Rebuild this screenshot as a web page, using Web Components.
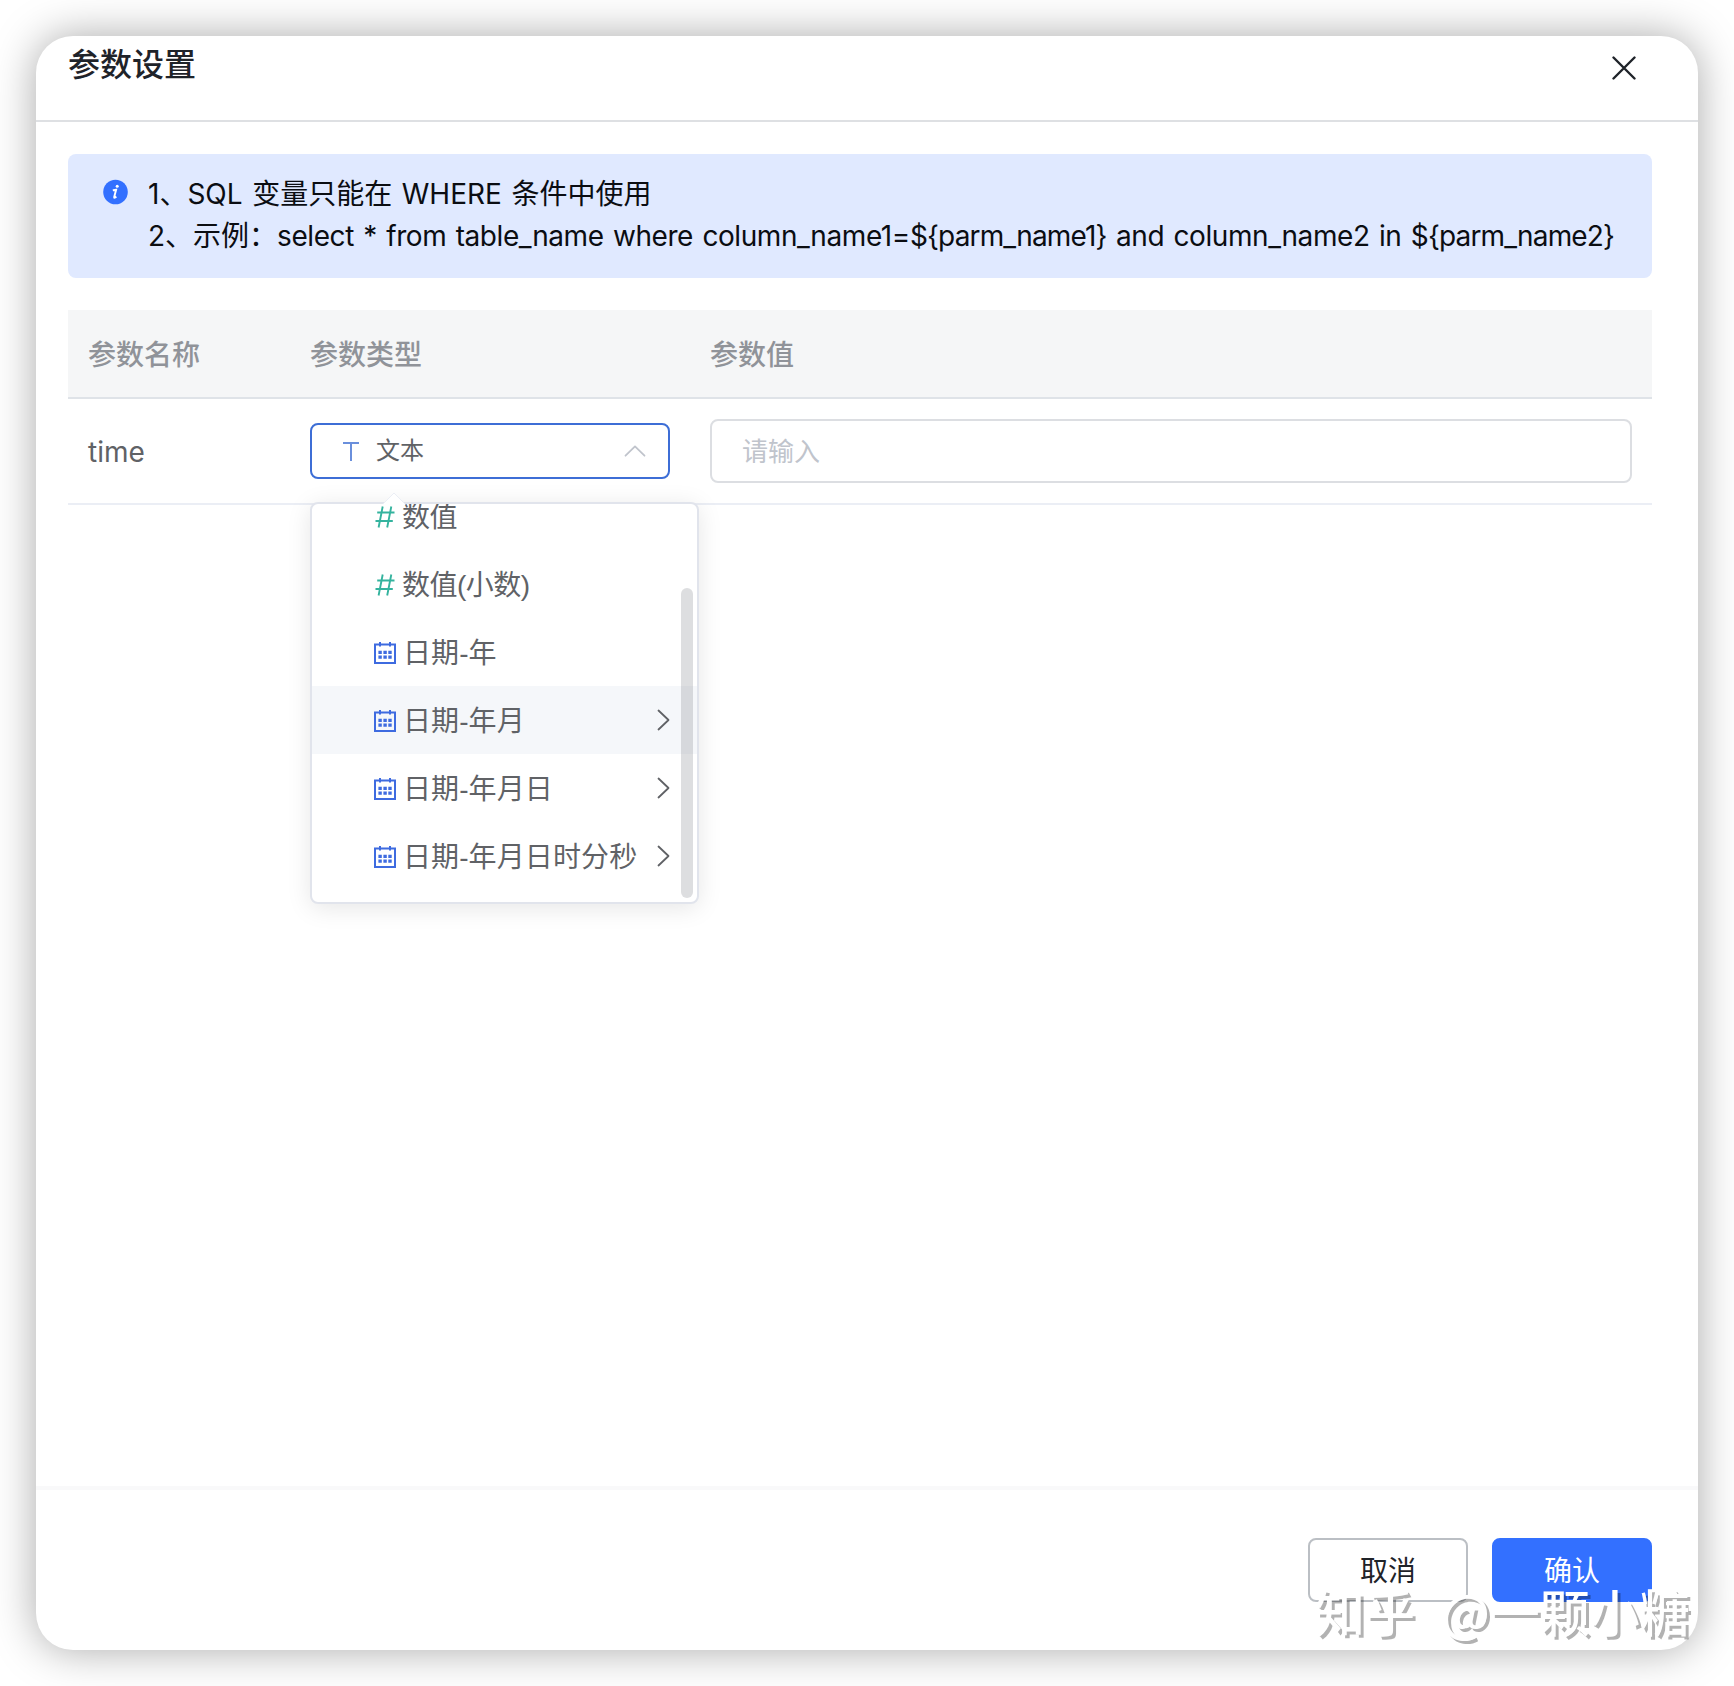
<!DOCTYPE html>
<html lang="zh-CN">
<head>
<meta charset="UTF-8">
<title>参数设置</title>
<style>
  body {
    box-sizing: border-box;
    margin: 0;
    padding: 36px;
    height: 1686px;
    overflow: hidden;
    background: #fff;
    font-family: Inter, "Noto Sans CJK SC", sans-serif;
    font-size: 28px;
    color: #606266;
  }
  .sql { letter-spacing: -.42px; word-spacing: 1.9px; }
  .var { letter-spacing: -.85px; }
</style>
</head>
<body>
<param-dialog heading="参数设置">
  <info-banner>
    <banner-line>1、SQL 变量只能在 WHERE 条件中使用</banner-line>
    <banner-line>2、示例：<span class="sql">select * from table_name where column_name1=<span class="var">${parm_name1}</span> and column_name2 in <span class="var">${parm_name2}</span></span></banner-line>
  </info-banner>
  <param-table>
    <span slot="name">time</span>
    <type-select slot="type" value="文本">
      <type-option icon="number">数值</type-option>
      <type-option icon="number">数值(小数)</type-option>
      <type-option icon="date">日期-年</type-option>
      <type-option icon="date" more active>日期-年月</type-option>
      <type-option icon="date" more>日期-年月日</type-option>
      <type-option icon="date" more>日期-年月日时分秒</type-option>
    </type-select>
    <text-field slot="value" placeholder="请输入"></text-field>
  </param-table>
  <dialog-button slot="footer">取消</dialog-button>
  <dialog-button slot="footer" primary>确认</dialog-button>
</param-dialog>
<water-mark>知乎 @一颗小糖</water-mark>

<script>
const icons = {
  close: '<svg width="24" height="24" viewBox="0 0 24 24" fill="none" stroke="#1f2329" stroke-width="2.4" stroke-linecap="round"><path d="M1.5 1.5l21 21M22.5 1.5l-21 21"/></svg>',
  info: '<svg width="26" height="26" viewBox="0 0 26 26"><circle cx="13.5" cy="13" r="12.3" fill="#3370ff"/><circle cx="15.2" cy="7.2" r="1.5" fill="#fff"/><path d="M10.8 11.4c1.4-.3 2.2-.5 3.3-.6l-1.9 7.2c-.2 1.1.8.9 2.1-.5" fill="none" stroke="#fff" stroke-width="1.9"/></svg>',
  text: '<svg width="16" height="20" viewBox="0 0 16 20" fill="none" stroke="#6a8fdc" stroke-width="2"><path d="M0 2h16M8 2v18"/></svg>',
  up: '<svg width="22" height="12" viewBox="0 0 22 12" fill="none" stroke="#c0c4cc" stroke-width="1.8" stroke-linecap="round" stroke-linejoin="round"><path d="M1.5 10.7L11 1.4l9.5 9.3"/></svg>',
  right: '<svg width="13" height="22" viewBox="0 0 13 22" fill="none" stroke="#606266" stroke-width="1.8" stroke-linecap="round" stroke-linejoin="round"><path d="M1.5 1.5l10 9.5-10 9.5"/></svg>',
  number: '<svg width="24" height="24" viewBox="0 0 24 24" fill="none" stroke="#34b39e" stroke-width="1.9"><path d="M4.2 7.5h17.3M2.5 16h17.3M9.7 1.5L5.6 22.5M18.3 1.5l-4.1 21"/></svg>',
  date: '<svg width="24" height="24" viewBox="0 0 24 24" fill="none" stroke="#3e6be0" stroke-width="2"><path d="M2 3.6h20V22H2zM7 1v4.4M17 1v4.4"/><path d="M5.4 11.4h3.4M10.4 11.4h3.4M15.3 11.4h3.4M5.4 16.2h3.4M10.4 16.2h3.4M15.3 16.2h3.4" stroke-width="3.2"/></svg>'
};

class ParamDialog extends HTMLElement {
  connectedCallback() {
    this.attachShadow({ mode: 'open' }).innerHTML = `
      <style>
        :host {
          display: flex;
          flex-direction: column;
          box-sizing: border-box;
          height: 1614px;
          border-radius: 37px;
          background: #fff;
          box-shadow: 0 0 44px rgba(0, 0, 0, .34);
        }
        header {
          display: flex;
          justify-content: space-between;
          box-sizing: border-box;
          height: 86px;
          padding: 0 62px 0 32px;
          border-bottom: 2px solid #dee0e3;
        }
        h1 {
          margin: 5px 0 0;
          font-size: 32px;
          font-weight: 500;
          line-height: 47px;
          color: #1f2329;
        }
        header svg { margin-top: 20px; }
        main {
          flex: 1;
          padding: 32px 46px 0 32px;
        }
        footer {
          display: flex;
          justify-content: flex-end;
          gap: 24px;
          box-sizing: border-box;
          height: 164px;
          padding: 48px 46px 0;
          border-top: 4px solid #f9f9fa;
        }
      </style>
      <header><h1>${this.getAttribute('heading')}</h1>${icons.close}</header>
      <main><slot></slot></main>
      <footer><slot name="footer"></slot></footer>
    `;
  }
}

class InfoBanner extends HTMLElement {
  connectedCallback() {
    this.attachShadow({ mode: 'open' }).innerHTML = `
      <style>
        :host {
          display: flex;
          box-sizing: border-box;
          height: 124px;
          padding: 19px 34px;
          border-radius: 8px;
          background: #e0e9ff;
          color: #0b0d12;
        }
        svg { flex: none; margin: 6px 20px 0 0; }
      </style>
      ${icons.info}<div><slot></slot></div>
    `;
  }
}

class BannerLine extends HTMLElement {
  connectedCallback() {
    this.attachShadow({ mode: 'open' }).innerHTML = `
      <style>
        :host {
          display: block;
          line-height: 42px;
          white-space: nowrap;
          word-spacing: 1.7px;
        }
      </style>
      <slot></slot>
    `;
  }
}

class ParamTable extends HTMLElement {
  connectedCallback() {
    this.attachShadow({ mode: 'open' }).innerHTML = `
      <style>
        :host { display: block; margin-top: 32px; }
        .row {
          display: grid;
          grid-template-columns: 222px 400px 1fr;
          align-items: center;
          box-sizing: border-box;
          height: 106px;
          border-bottom: 2px solid #ebeef5;
        }
        .row > div { padding: 0 20px; }
        .row > .name { padding-top: 1px; }
        .head {
          height: 89px;
          padding-bottom: 2px;
          background: #f5f6f7;
          border-color: #dfe3e8;
          color: #909399;
          font-weight: 500;
        }
      </style>
      <div class="row head"><div>参数名称</div><div>参数类型</div><div>参数值</div></div>
      <div class="row">
        <div class="name"><slot name="name"></slot></div>
        <div><slot name="type"></slot></div>
        <div><slot name="value"></slot></div>
      </div>
    `;
  }
}

class TypeSelect extends HTMLElement {
  connectedCallback() {
    this.attachShadow({ mode: 'open' }).innerHTML = `
      <style>
        :host { display: block; position: relative; }
        .box {
          display: flex;
          align-items: center;
          box-sizing: border-box;
          height: 56px;
          padding: 0 22px 0 31px;
          border: 2px solid #3d6ed6;
          border-radius: 8px;
          font-size: 24px;
        }
        .box span { flex: 1; margin-left: 17px; padding-bottom: 5px; }
        .menu {
          position: absolute;
          top: 79px;
          left: 0;
          z-index: 2;
          box-sizing: border-box;
          width: 389px;
          height: 402px;
          border: 2px solid #e1e4ec;
          border-radius: 8px;
          background: #fff;
          box-shadow: 0 4px 24px rgba(0, 0, 0, .1);
        }
        /* the list is scrolled, so its first row is cut off */
        .list { height: 398px; overflow: hidden; border-radius: 6px; }
        .scroll { margin-top: -22px; }
        .arrow { position: absolute; top: -12px; left: 70px; }
        .bar {
          position: absolute;
          top: 84px;
          right: 4px;
          width: 12px;
          height: 310px;
          border-radius: 6px;
          background: rgba(144, 147, 153, .3);
        }
      </style>
      <div class="box">${icons.text}<span>${this.getAttribute('value')}</span>${icons.up}</div>
      <div class="menu">
        <svg class="arrow" width="24" height="13" viewBox="0 0 24 13"><path d="M0 13L12 1l12 12z" fill="#fff"/><path d="M1 12L12 1l11 11" fill="none" stroke="#ebeef5"/></svg>
        <div class="list"><div class="scroll"><slot></slot></div></div>
        <div class="bar"></div>
      </div>
    `;
  }
}

class TypeOption extends HTMLElement {
  connectedCallback() {
    this.attachShadow({ mode: 'open' }).innerHTML = `
      <style>
        :host {
          display: flex;
          align-items: center;
          box-sizing: border-box;
          height: 68px;
          padding: 0 27px 0 61px;
          font-family: "Liberation Sans", "Noto Sans CJK SC", sans-serif;
          white-space: nowrap;
        }
        :host([active]) { background: #f5f7fa; }
        svg { flex: none; }
        svg:first-of-type { margin-top: 2px; }
        span { flex: 1; margin-left: 5px; padding-bottom: 3px; letter-spacing: -.5px; }
        :host([icon="date"]) span { margin-left: 6px; letter-spacing: .1px; }
      </style>
      ${icons[this.getAttribute('icon')]}<span><slot></slot></span>${this.hasAttribute('more') ? icons.right : ''}
    `;
  }
}

class TextField extends HTMLElement {
  connectedCallback() {
    this.attachShadow({ mode: 'open' }).innerHTML = `
      <style>
        :host {
          display: flex;
          align-items: center;
          box-sizing: border-box;
          height: 64px;
          padding: 0 30px 4px;
          border: 2px solid #dcdee2;
          border-radius: 8px;
          font-size: 26px;
          color: #c0c4cc;
        }
      </style>
      ${this.getAttribute('placeholder')}
    `;
  }
}

class DialogButton extends HTMLElement {
  connectedCallback() {
    this.attachShadow({ mode: 'open' }).innerHTML = `
      <style>
        :host {
          display: flex;
          align-items: center;
          justify-content: center;
          box-sizing: border-box;
          width: 160px;
          height: 64px;
          padding-bottom: 2px;
          border: 2px solid #bbbfc4;
          border-radius: 8px;
          color: #1f2329;
        }
        :host([primary]) {
          border-color: #3370ff;
          background: #3370ff;
          color: #fff;
        }
      </style>
      <slot></slot>
    `;
  }
}

class WaterMark extends HTMLElement {
  connectedCallback() {
    this.attachShadow({ mode: 'open' }).innerHTML = `
      <style>
        :host {
          position: absolute;
          left: 1315px;
          top: 1574px;
          z-index: 3;
          font-family: "Noto Sans CJK SC", sans-serif;
          font-size: 50px;
          font-weight: 500;
          line-height: 72px;
          white-space: nowrap;
          word-spacing: 15px;
          color: #fff;
          text-shadow: 3px 3px 0 rgba(0, 0, 0, .3);
        }
      </style>
      <slot></slot>
    `;
  }
}

customElements.define('param-dialog', ParamDialog);
customElements.define('info-banner', InfoBanner);
customElements.define('banner-line', BannerLine);
customElements.define('param-table', ParamTable);
customElements.define('type-select', TypeSelect);
customElements.define('type-option', TypeOption);
customElements.define('text-field', TextField);
customElements.define('dialog-button', DialogButton);
customElements.define('water-mark', WaterMark);
</script>
</body>
</html>
